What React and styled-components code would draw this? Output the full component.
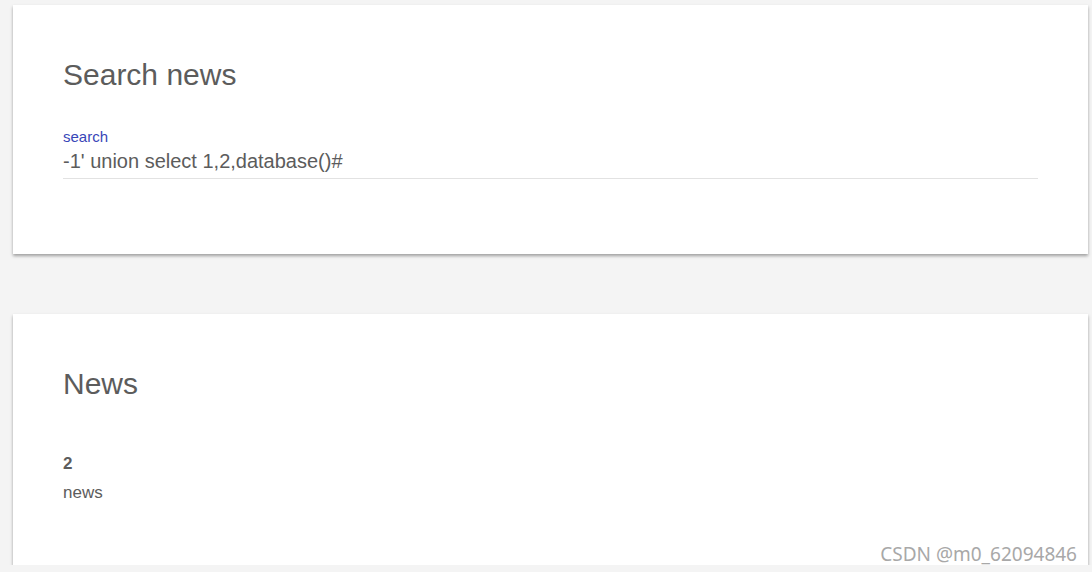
import React from 'react';
import styled, { createGlobalStyle } from 'styled-components';

const GlobalStyle = createGlobalStyle`
  html, body {
    margin: 0;
    padding: 0;
    background-color: #f4f4f4;
    font-family: "Liberation Sans", Arial, sans-serif;
  }
`;

const Page = styled.div`
  padding: 5px 4px 0 13px;
  display: flex;
  flex-direction: column;
  gap: 60px;
`;

const Card = styled.section`
  position: relative;
  background-color: #fff;
  padding: 53px 50px ${props => props.$bottom || 50}px;
  box-shadow: 0 2px 3px rgba(0, 0, 0, 0.35);
  color: #5c5c5c;
`;

const Title = styled.h2`
  margin: 0;
  font-size: 30px;
  font-weight: normal;
  line-height: normal;
  color: #5c5c5c;
`;

const Field = styled.div`
  margin-top: 36px;
  display: flex;
  flex-direction: column;
`;

const Label = styled.label`
  font-size: 15px;
  line-height: normal;
  color: #3846b8;
`;

const Input = styled.input`
  margin-top: 2px;
  height: 32px;
  box-sizing: border-box;
  padding: 0 0 2px 0;
  border: none;
  border-bottom: 1px solid #e2e2e2;
  outline: none;
  background: transparent;
  font-family: "Liberation Sans", Arial, sans-serif;
  font-size: 20px;
  color: #5c5c5c;
`;

const NewsList = styled.div`
  margin-top: 53px;
  display: flex;
  flex-direction: column;
`;

const NewsItem = styled.div`
  font-size: 17px;
  line-height: normal;
  font-weight: ${props => (props.$bold ? 'bold' : 'normal')};
  margin-bottom: ${props => (props.$bold ? 9 : 0)}px;
  color: #5c5c5c;
`;

const Watermark = styled.span`
  position: absolute;
  right: 11px;
  bottom: -2px;
  font-family: "Noto Sans", "Open Sans", sans-serif;
  font-size: 19px;
  color: #a8a8a8;
`;

function App() {
  return (
    <>
      <GlobalStyle />
      <Page>
        <Card $bottom={75}>
          <Title>Search news</Title>
          <Field>
            <Label htmlFor="search">search</Label>
            <Input id="search" readOnly value="-1' union select 1,2,database()#" />
          </Field>
        </Card>

        <Card $bottom={62}>
          <Title>News</Title>
          <NewsList>
            <NewsItem $bold>2</NewsItem>
            <NewsItem>news</NewsItem>
          </NewsList>
          <Watermark>CSDN @m0_62094846</Watermark>
        </Card>
      </Page>
    </>
  );
}

export default App;
